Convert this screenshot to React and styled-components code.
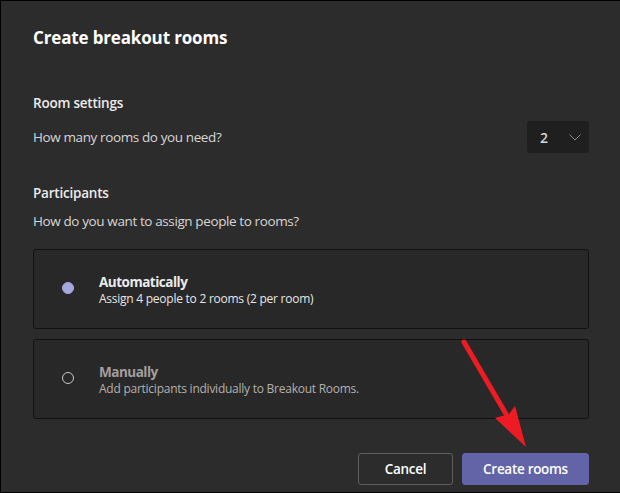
import React from "react";
import styled, { createGlobalStyle } from "styled-components";

const Global = createGlobalStyle`
  html, body { margin: 0; padding: 0; background: #000; }
  body { font-family: "Open Sans", "Noto Sans", "Liberation Sans", sans-serif; }
`;

const Dialog = styled.div`
  position: relative;
  box-sizing: border-box;
  width: 619px;
  height: 491px;
  margin: 1px 0 0 1px;
  padding: 26px 31px 0 32px;
  background: #2d2c2c;
  color: #fff;
  overflow: hidden;
  display: flex;
  flex-direction: column;
`;

const Title = styled.h1`
  margin: 0;
  font-size: 17px;
  line-height: 22px;
  font-weight: 700;
  letter-spacing: -0.15px;
  color: #fff;
`;

const SectionHeading = styled.h2`
  margin: ${(p) => p.$top}px 0 0;
  font-size: 13.5px;
  line-height: 18px;
  font-weight: 600;
  letter-spacing: -0.22px;
  color: #ebebeb;
`;

const SettingRow = styled.div`
  display: flex;
  align-items: center;
  justify-content: space-between;
  height: 32px;
  margin-top: 9px;
`;

const Prompt = styled.p`
  margin: ${(p) => p.$top || 0}px 0 0;
  font-size: 13.5px;
  line-height: 18px;
  letter-spacing: -0.39px;
  color: #d6d6d6;
`;

const Select = styled.div`
  box-sizing: border-box;
  width: 62px;
  height: 32px;
  padding: 0 6px 0 13px;
  border-radius: 3px;
  background: #201f1f;
  display: flex;
  align-items: center;
  justify-content: space-between;
  font-size: 14px;
  font-weight: 600;
  color: #d6d6d6;
`;

const Cards = styled.div`
  display: flex;
  flex-direction: column;
  gap: 10px;
  margin-top: 19px;
`;

const Card = styled.div`
  box-sizing: border-box;
  height: 80px;
  padding: 0 0 2px 28px;
  border: 1px solid #111;
  border-radius: 3px;
  background: #292828;
  display: flex;
  align-items: center;
  gap: 25px;
`;

const Radio = styled.span`
  box-sizing: border-box;
  flex: none;
  width: 12px;
  height: 12px;
  border-radius: 50%;
  border: 1px solid ${(p) => (p.$checked ? "#a6a7dc" : "#c8c6c4")};
  background: ${(p) => (p.$checked ? "#a6a7dc" : "transparent")};
`;

const CardText = styled.div`
  display: flex;
  flex-direction: column;
  margin-top: 4px;
`;

const CardTitle = styled.span`
  font-size: 13.5px;
  line-height: 18px;
  font-weight: 700;
  letter-spacing: -0.5px;
  color: ${(p) => (p.$muted ? "#a19f9d" : "#ebebeb")};
`;

const CardDetail = styled.span`
  font-size: 12px;
  line-height: 16px;
  letter-spacing: -0.25px;
  color: ${(p) => (p.$muted ? "#b3b0ad" : "#e6e6e6")};
`;

const Footer = styled.div`
  display: flex;
  justify-content: flex-end;
  gap: 9px;
  margin-top: 34px;
`;

const Button = styled.button`
  box-sizing: border-box;
  width: ${(p) => p.$width}px;
  height: 32px;
  padding: 0;
  border-radius: 3px;
  border: 1px solid ${(p) => (p.$primary ? "#6264a7" : "#605e5c")};
  background: ${(p) => (p.$primary ? "#6264a7" : "transparent")};
  color: #fff;
  font-family: inherit;
  font-size: 13.5px;
  font-weight: 600;
  letter-spacing: -0.3px;
`;

const Arrow = styled.svg`
  position: absolute;
  left: 0;
  top: 0;
  pointer-events: none;
`;

export default function App() {
  return (
    <>
      <Global />
      <Dialog>
        <Title>Create breakout rooms</Title>
        <SectionHeading $top={45}>Room settings</SectionHeading>
        <SettingRow>
          <Prompt>How many rooms do you need?</Prompt>
          <Select>
            2
            <svg width="16" height="16" viewBox="0 0 16 16" fill="none">
              <path d="M2.500 5.500 8 11l5.500-5.500" stroke="#8a8886" strokeWidth="1" />
            </svg>
          </Select>
        </SettingRow>
        <SectionHeading $top={31}>Participants</SectionHeading>
        <Prompt $top={10}>How do you want to assign people to rooms?</Prompt>
        <Cards>
          <Card>
            <Radio $checked />
            <CardText>
              <CardTitle>Automatically</CardTitle>
              <CardDetail>Assign 4 people to 2 rooms (2 per room)</CardDetail>
            </CardText>
          </Card>
          <Card>
            <Radio />
            <CardText>
              <CardTitle $muted>Manually</CardTitle>
              <CardDetail $muted>Add participants individually to Breakout Rooms.</CardDetail>
            </CardText>
          </Card>
        </Cards>
        <Footer>
          <Button $width={95}>Cancel</Button>
          <Button $primary $width={127}>Create rooms</Button>
        </Footer>
        <Arrow width="619" height="491" viewBox="1 1 619 491">
          <path d="M464 342 506 414" stroke="#ed1c24" strokeWidth="5" strokeLinecap="round" fill="none" />
          <path d="M526 447 495 418 509 414 515 406Z" fill="#ed1c24" />
        </Arrow>
      </Dialog>
    </>
  );
}
